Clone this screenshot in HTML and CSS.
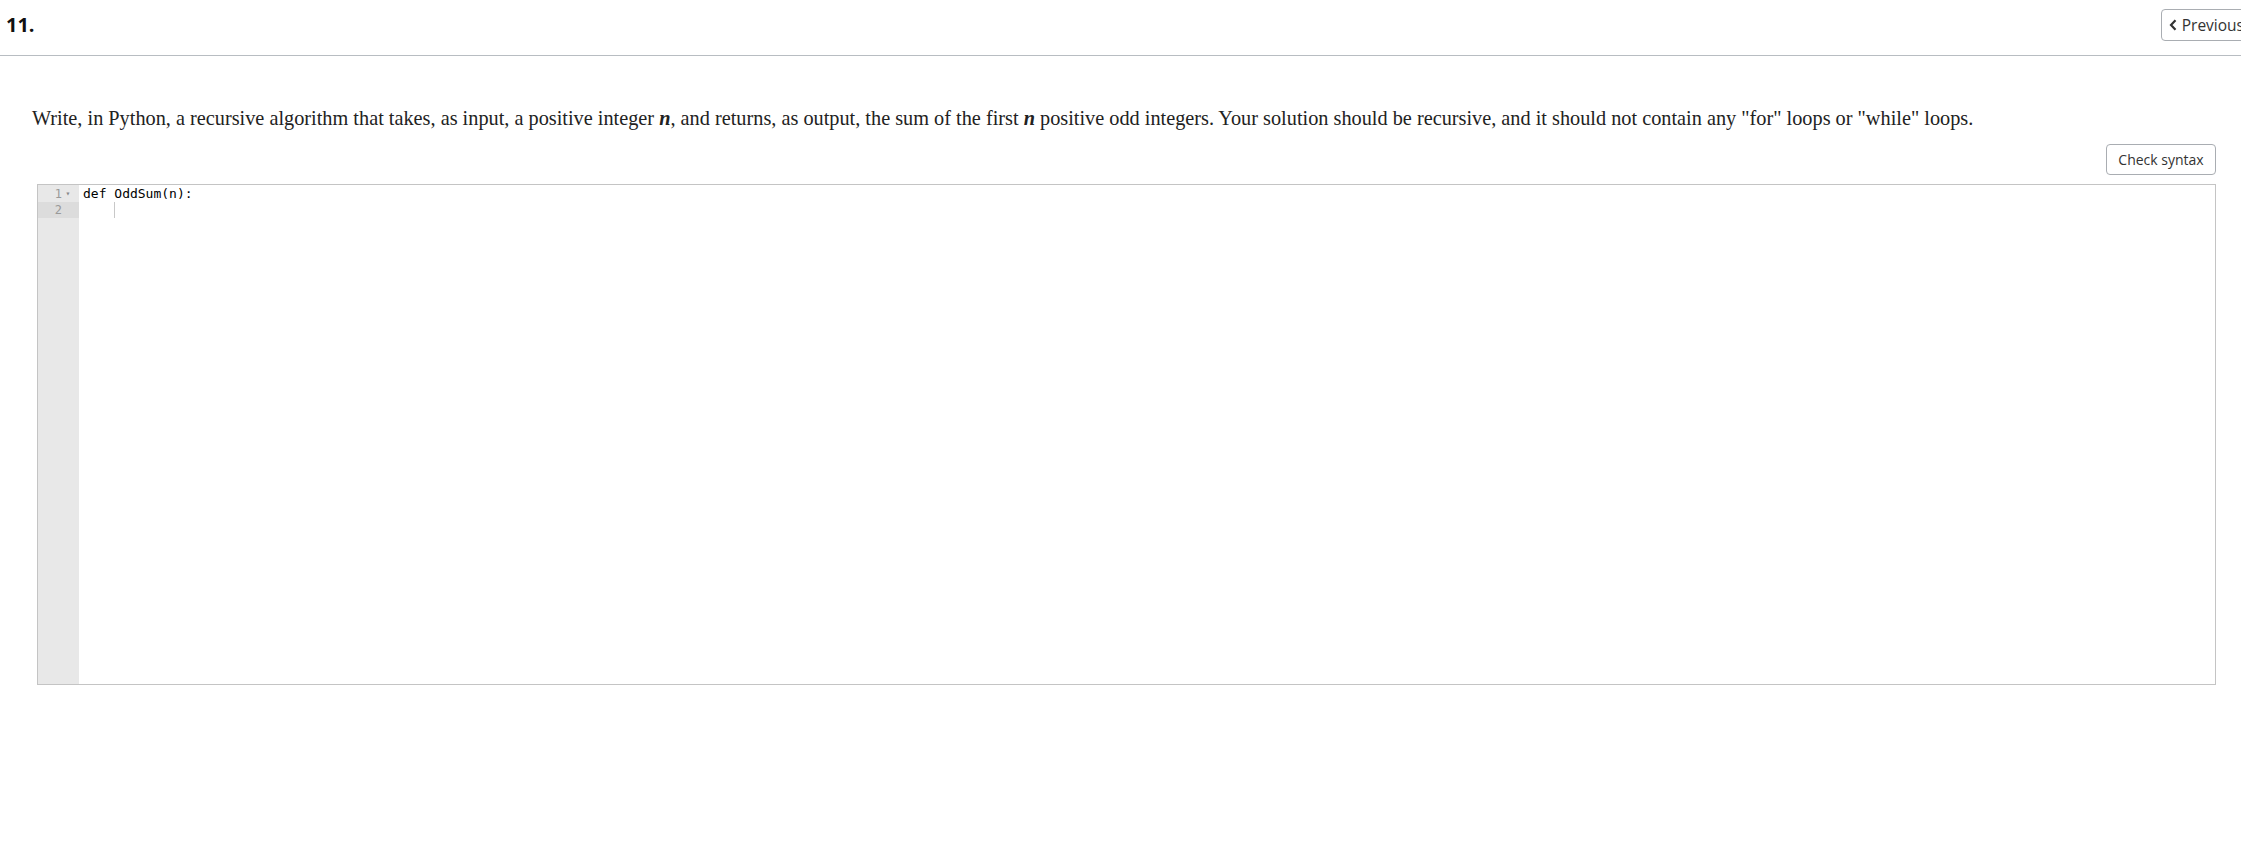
FILE: index.html
```html
<!DOCTYPE html>
<html>
<head>
<meta charset="utf-8">
<link rel="stylesheet" href="styles.css">
</head>
<body>
<header class="topbar">
  <div class="qnum">11.</div>
  <button class="btn btn-prev"><svg class="chev" width="8" height="12" viewBox="0 0 8 12"><path d="M6.5 1.2 L2 6 L6.5 10.8" fill="none" stroke="#333" stroke-width="2.2"/></svg>Previous</button>
</header>
<main class="content">
  <p class="question">Write, in Python, a recursive algorithm that takes, as input, a positive integer <i class="var">n</i>, and returns, as output, the sum of the first <i class="var">n</i> positive odd integers. Your solution should be recursive, and it should not contain any "for" loops or "while" loops.</p>
  <div class="toolbar"><button class="btn btn-check">Check syntax</button></div>
  <div class="editor">
    <div class="gutter">
      <div class="gline"><span class="num">1</span><span class="fold">&#9662;</span></div>
      <div class="gline active"><span class="num">2</span><span class="fold"></span></div>
    </div>
    <div class="code">
      <div class="cline"><span class="kw">def</span> OddSum(n):</div>
      <div class="cline">    <span class="cursor"></span></div>
    </div>
  </div>
</main>
</body>
</html>
```
FILE: styles.css
```css
html, body {
  margin: 0;
  padding: 0;
  background: #fff;
  overflow: hidden;
}
body {
  font-family: "Open Sans", "Liberation Sans", sans-serif;
  color: #222;
}
.topbar {
  height: 56px;
  border-bottom: 1px solid #b8bdc2;
  display: flex;
  align-items: flex-start;
  justify-content: space-between;
  box-sizing: border-box;
}
.qnum {
  font-weight: 700;
  font-size: 20px;
  line-height: 26px;
  padding: 12px 0 0 6px;
  color: #111;
}
.btn {
  font-family: "Open Sans", "Liberation Sans", sans-serif;
  background: #fff;
  border: 1px solid #a9adb2;
  border-radius: 4px;
  color: #333;
  cursor: pointer;
}
.btn-prev {
  margin-top: 9px;
  margin-right: -16px;
  height: 32px;
  font-size: 15.5px;
  padding: 0 12px 0 7px;
  display: flex;
  align-items: center;
  gap: 5px;
}
.chev { display: block; }
.content {
  padding: 0 25px 0 37px;
}
.question {
  font-family: "Liberation Serif", "Times New Roman", serif;
  font-size: 20.3px;
  color: #222;
  margin: 0 0 0 -5px;
  padding-top: 50px;
  line-height: 24px;
  white-space: nowrap;
}
.var {
  font-weight: 700;
}
.toolbar {
  display: flex;
  justify-content: flex-end;
  margin-top: 14px;
}
.btn-check {
  height: 31px;
  width: 110px;
  font-size: 14px;
  padding: 0;
}
.editor {
  margin-top: 9px;
  height: 499px;
  border: 1px solid #c4c4c4;
  display: flex;
  font-family: "DejaVu Sans Mono", "Liberation Mono", monospace;
  font-size: 13px;
  line-height: 16px;
}
.gutter {
  width: 41px;
  background: #e8e8e8;
  padding-top: 1px;
  flex: none;
}
.gline {
  height: 16px;
  display: flex;
  justify-content: flex-end;
  color: #999;
  padding-right: 5px;
}
.gline.active { background: #dcdcdc; }
.num { font-size: 12px; }
.fold {
  width: 12px;
  font-size: 8px;
  text-align: center;
  color: #888;
}
.code {
  padding: 1px 0 0 4px;
  color: #000;
}
.cline { height: 16px; white-space: pre; }
.kw { color: #000; font-weight: 400; }
.cursor {
  display: inline-block;
  width: 1px;
  height: 16px;
  background: #c8c8c8;
  vertical-align: top;
}
```
